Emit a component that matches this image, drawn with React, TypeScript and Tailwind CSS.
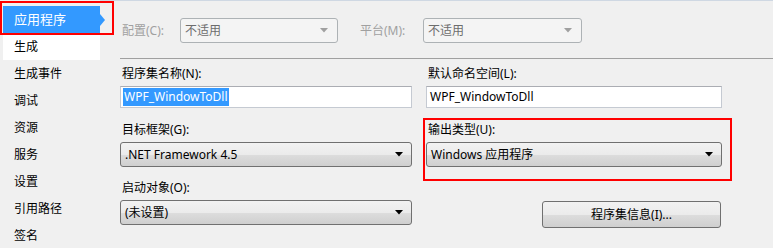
import React from "react";

const font = "font-['Segoe_UI','Noto_Sans','Noto_Sans_CJK_SC',sans-serif]";

const navItems = ["应用程序", "生成", "生成事件", "调试", "资源", "服务", "设置", "引用路径", "签名"];

function Arrow({ color = "#000" }: { color?: string }) {
  return (
    <svg width="8" height="5" viewBox="0 0 8 5" className="shrink-0">
      <path d="M0 0 H8 L4 4.5 Z" fill={color} />
    </svg>
  );
}

function DisabledCombo({ value, width }: { value: string; width: string }) {
  return (
    <div
      className={`${width} h-[25px] flex items-center justify-between pl-[4px] pr-[9px] rounded-[3px] border border-[#adb2b5] bg-[#f4f4f4] text-[#6d6d6d]`}
    >
      <span>{value}</span>
      <Arrow color="#a0a0a0" />
    </div>
  );
}

function Dropdown({ value }: { value: string }) {
  return (
    <div className="w-full h-[25px] flex items-center justify-between pl-[4px] pr-[8px] rounded-[3px] border border-[#707070] bg-[linear-gradient(#f2f2f2_0%,#ebebeb_50%,#dddddd_50%,#cfcfcf_100%)] text-black">
      <span>{value}</span>
      <Arrow />
    </div>
  );
}

function TextBox({ value, selected }: { value: string; selected?: boolean }) {
  return (
    <div className="w-full h-[22px] flex items-center pl-[2px] border border-[#c5cad2] border-t-[#abadb3] bg-white">
      {selected ? (
        <span className="bg-[#3399ff] text-white leading-[18px] px-[1px]">{value}</span>
      ) : (
        <span className="text-black px-[1px]">{value}</span>
      )}
    </div>
  );
}

function Label({ text, className = "" }: { text: string; className?: string }) {
  return <div className={`h-[16px] leading-[16px] pl-[2px] text-black ${className}`}>{text}</div>;
}

export default function App() {
  return (
    <div className={`relative w-[773px] h-[248px] overflow-hidden bg-[#f0f0f0] flex text-[12px] ${font}`}>
      {/* sidebar */}
      <div className="w-[100px] shrink-0 pt-[6px] pl-[3px]">
        {navItems.map((item, i) => (
          <div
            key={item}
            className={`relative h-[27px] w-[97px] flex items-center pl-[11px] ${
              i === 0 ? "bg-[#3399ff] text-white text-[13px]" : i === 1 ? "bg-white text-black" : "text-black"
            }`}
          >
            {item}
            {i === 0 && (
              <span className="absolute right-[-5px] top-[8px] w-0 h-0 border-y-[6px] border-y-transparent border-l-[5px] border-l-[#3399ff]" />
            )}
          </div>
        ))}
      </div>

      {/* content */}
      <div className="flex-1 border-t border-[#cfd8e3]">
        <div className="flex items-center h-[25px] mt-[17px] pl-[22px]">
          <span className="w-[58px] text-[#a0a0a0]">配置(C):</span>
          <DisabledCombo value="不适用" width="w-[158px]" />
          <span className="w-[63px] ml-[22px] text-[#a0a0a0]">平台(M):</span>
          <DisabledCombo value="不适用" width="w-[159px]" />
        </div>

        <div className="ml-[20px] mt-[15px] h-px bg-[#a0a0a0]" />

        <div className="grid grid-cols-[292px_296px] gap-x-[14px] pl-[20px] pt-[7px]">
          <div>
            <Label text="程序集名称(N):" />
            <div className="mt-[4px]">
              <TextBox value="WPF_WindowToDll" selected />
            </div>
            <Label text="目标框架(G):" className="mt-[14px]" />
            <div className="mt-[4px]">
              <Dropdown value=".NET Framework 4.5" />
            </div>
            <Label text="启动对象(O):" className="mt-[13px]" />
            <div className="mt-[4px]">
              <Dropdown value="(未设置)" />
            </div>
          </div>

          <div>
            <Label text="默认命名空间(L):" />
            <div className="mt-[4px]">
              <TextBox value="WPF_WindowToDll" />
            </div>
            <Label text="输出类型(U):" className="mt-[14px]" />
            <div className="mt-[4px]">
              <Dropdown value="Windows 应用程序" />
            </div>
            <div className="flex justify-end mt-[34px] pr-[1px]">
              <button className="w-[179px] h-[27px] rounded-[3px] border border-[#707070] bg-[linear-gradient(#f2f2f2_0%,#ebebeb_50%,#dddddd_50%,#cfcfcf_100%)] text-black">
                程序集信息(I)...
              </button>
            </div>
          </div>
        </div>
      </div>

      {/* red annotation boxes */}
      <div className="absolute left-0 top-[1px] w-[114px] h-[34px] border-2 border-[#ff0000] pointer-events-none" />
      <div className="absolute left-[423px] top-[118px] w-[309px] h-[63px] border-2 border-[#ff0000] pointer-events-none" />
    </div>
  );
}
